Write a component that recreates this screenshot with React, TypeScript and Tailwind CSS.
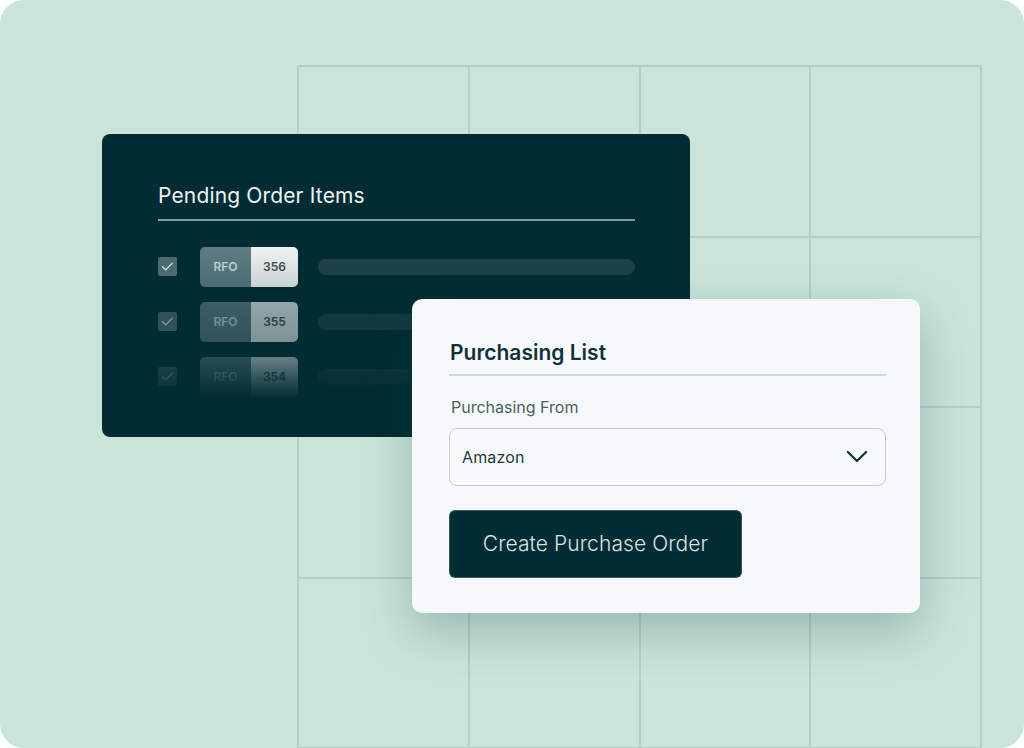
import React from 'react';

const font = { fontFamily: 'Inter, "Noto Sans", sans-serif' };

function Check() {
  return (
    <svg viewBox="0 0 19 19" className="w-[19px] h-[19px]">
      <path d="M4.5 9.8l3.2 3.1 6.6-6.8" fill="none" stroke="#dfe8e8" strokeWidth="1.3" strokeLinecap="round" strokeLinejoin="round" />
    </svg>
  );
}

function OrderRow({ num }: { num: number }) {
  return (
    <div className="flex items-center h-[40px]">
      <div className="w-[19px] h-[19px] rounded-[2px] bg-[#4b6b71] flex items-center justify-center">
        <Check />
      </div>
      <div className="ml-[23px] flex h-[40px] w-[98px] rounded-[5px] overflow-hidden">
        <div className="w-[51px] flex items-center justify-center bg-gradient-to-b from-[#5e7e84] to-[#4b6c72] text-[12px] font-semibold text-[#bccdcf]">
          RFO
        </div>
        <div className="flex-1 flex items-center justify-center bg-gradient-to-b from-[#f0f3f3] to-[#c9d2d2] text-[12px] font-semibold text-[#3a4d50]">
          {num}
        </div>
      </div>
      <div className="ml-[20px] flex-1 h-[16px] rounded-full bg-[#1d4146]" />
    </div>
  );
}

export default function App() {
  return (
    <div className="w-[1024px] h-[748px] bg-white" style={font}>
      <div className="relative w-full h-full rounded-[24px] bg-[#cae4da] overflow-hidden">
        {/* backdrop grid */}
        <div className="absolute left-[297px] top-[65px] grid grid-cols-4 border-l-2 border-t-2 border-[#b3cec8]">
          {Array.from({ length: 16 }).map((_, i) => (
            <div key={i} className="w-[170.75px] h-[170.5px] border-r-2 border-b-2 border-[#b3cec8]" />
          ))}
        </div>

        {/* Pending order card */}
        <div className="absolute left-[102px] top-[134px] w-[588px] h-[303px] rounded-[8px] bg-[#022c33] pt-[48px] pl-[56px] pr-[55px]">
          <h2 className="text-[21px] leading-[28px] text-[#eef4f4] tracking-[0.15px]">Pending Order Items</h2>
          <div className="mt-[9px] h-[1.5px] bg-[#7f9a9b]" />
          <div className="mt-[26px] flex flex-col gap-[15px]">
            <OrderRow num={356} />
            <div className="opacity-[0.62]">
              <OrderRow num={355} />
            </div>
            <div className="relative opacity-[0.4]">
              <OrderRow num={354} />
              <div className="absolute inset-x-0 top-[4px] h-[38px] bg-gradient-to-b from-[#022c33]/0 to-[#022c33]" />
            </div>
          </div>
        </div>

        {/* Purchasing list card */}
        <div className="absolute left-[412px] top-[299px] w-[508px] h-[314px] rounded-[10px] bg-[#f6f9fc] shadow-[0_18px_50px_rgba(20,70,70,0.28)] pt-[40px] pl-[37px] pr-[34px]">
          <h2 className="text-[21px] leading-[28px] font-semibold text-[#0f3237] pl-[1px]">Purchasing List</h2>
          <div className="mt-[7px] h-[1.5px] bg-[#d2dadb]" />
          <div className="mt-[19px] pl-[2px] text-[16px] leading-[24px] text-[#48615f]">Purchasing From</div>
          <div className="mt-[9px] h-[58px] rounded-[8px] border border-[#c9cbc4] bg-[#f7fafc] flex items-center justify-between pl-[12px] pr-[17px]">
            <span className="text-[16px] text-[#1f3b3e] tracking-[0.15px]">Amazon</span>
            <svg viewBox="0 0 24 14" className="w-[22px] h-[13px]">
              <path d="M2 2l10 10 10-10" fill="none" stroke="#123539" strokeWidth="2.4" strokeLinecap="round" strokeLinejoin="round" />
            </svg>
          </div>
          <button className="mt-[24px] w-[293px] h-[68px] rounded-[6px] bg-[#022c33] border border-[#8a9c9c]/40 text-[21px] text-[#d9e5e4] font-light tracking-[0.1px]">
            Create Purchase Order
          </button>
        </div>
      </div>
    </div>
  );
}
